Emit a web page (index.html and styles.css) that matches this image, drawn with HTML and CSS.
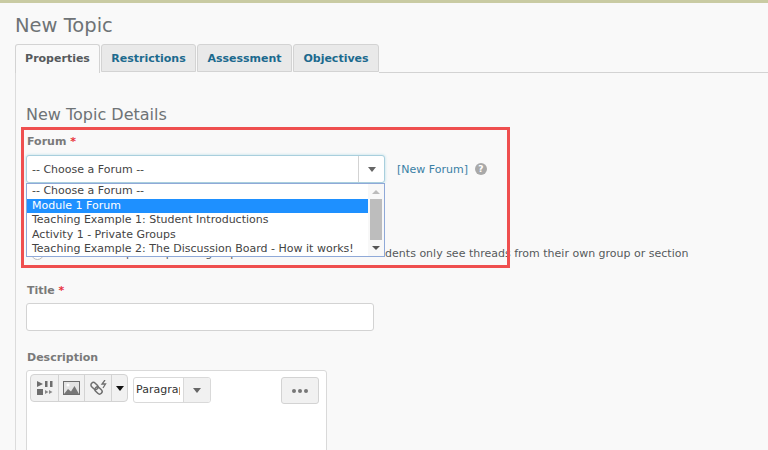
FILE: index.html
```html
<!DOCTYPE html>
<html lang="en">
  <head>
    <meta name="viewport" content="width=device-width" />
    <title>New Topic</title>
    <link rel="stylesheet" href="styles.css">
  </head>
  <body>
    <div class="topbar"></div>
    <main class="page">
      <h1>New Topic</h1>
      <div class="tabs">
        <a class="tab active">Properties</a>
        <a class="tab tab-restrictions">Restrictions</a>
        <a class="tab tab-assessment">Assessment</a>
        <a class="tab tab-objectives">Objectives</a>
        <span class="tabs-rest"></span>
      </div>
      <section class="panel">
        <h2>New Topic Details</h2>

        <label class="field-label">Forum <span class="req">*</span></label>
        <div class="forum-row">
          <div class="select">
            <span class="select-value">-- Choose a Forum --</span>
            <span class="select-arrow"><i class="caret"></i></span>
            <div class="listbox">
              <ul>
                <li>-- Choose a Forum --</li>
                <li class="selected">Module 1 Forum</li>
                <li>Teaching Example 1: Student Introductions</li>
                <li>Activity 1 - Private Groups</li>
                <li>Teaching Example 2: The Discussion Board - How it works!</li>
              </ul>
              <div class="scrollbar">
                <i class="sb-up"></i>
                <span class="sb-thumb"></span>
                <i class="sb-down"></i>
              </div>
            </div>
          </div>
          <a class="new-forum">[New Forum]</a>
          <span class="help">?</span>
        </div>

        <div class="radio-row">
          <span class="radio"></span>
          <span>Restrict this topic to specific groups or sections so that all students only see threads from their own group or section</span>
        </div>

        <label class="field-label title-label">Title <span class="req">*</span></label>
        <div class="text-input"></div>

        <label class="field-label desc-label">Description</label>
        <div class="editor">
          <div class="toolbar">
            <div class="btn-group">
              <span class="tool tool-media">
                <svg width="16" height="14" viewBox="0 0 16 14">
                  <path d="M0 0l6 3-6 3z" fill="#6e6e6e"/>
                  <rect x="8" y="0" width="2.5" height="6" fill="#6e6e6e"/>
                  <rect x="13" y="0" width="2.5" height="6" fill="#6e6e6e"/>
                  <rect x="0" y="8" width="6" height="6" fill="#6e6e6e"/>
                  <path d="M8 9l3.5 2-3.5 2zM12 9l3.5 2-3.5 2z" fill="#8a8a8a"/>
                </svg>
              </span>
              <span class="tool tool-image">
                <svg width="17" height="14" viewBox="0 0 17 14">
                  <rect x="0.5" y="0.5" width="16" height="13" fill="#e4e4e4" stroke="#6e6e6e"/>
                  <path d="M1 13l4-5 3 2.5 3.5-5.5 4.500 8z" fill="#777"/>
                  <circle cx="5" cy="4" r="1.500" fill="#fff"/>
                </svg>
              </span>
              <span class="tool tool-link">
                <svg width="17" height="16" viewBox="0 0 17 16" fill="none" stroke="#6e6e6e" stroke-width="1.500">
                  <rect x="0.500" y="3.500" width="8" height="5" rx="2.500" transform="rotate(45 4.500 6)"/>
                  <rect x="4.500" y="8" width="8" height="5" rx="2.500" transform="rotate(45 8.500 10.500)"/>
                  <path d="M15 0l-3 4h3.500l-2.500 4" stroke-width="1.300"/>
                </svg>
              </span>
              <span class="tool tool-more"><i class="caret dark"></i></span>
            </div>
            <div class="format">
              <span class="format-value">Paragraph</span>
              <span class="format-arrow"><i class="caret"></i></span>
            </div>
            <span class="more-btn"><i></i><i></i><i></i></span>
          </div>
        </div>
      </section>
    </main>
    <div class="highlight"></div>
  </body>
</html>
```

FILE: styles.css
```css
html, body {
  margin: 0;
  height: 450px;
  overflow: hidden;
}

body {
  background: #f9f9f9;
  color: #565a5c;
  font-family: "DejaVu Sans", Verdana, sans-serif;
  font-size: 11px;
}

.topbar {
  height: 3px;
  background: #c9cba3;
}

.page {
  padding: 0 0 0 15px;
}

h1 {
  margin: 0;
  padding-top: 11px;
  height: 30px;
  font-size: 19.500px;
  line-height: 24px;
  font-weight: normal;
  color: #6e7376;
}

/* tabs */
.tabs {
  display: flex;
  height: 29px;
}

.tab {
  box-sizing: border-box;
  height: 28px;
  margin-right: 1px;
  border: 1px solid #d3d3d3;
  border-radius: 3px 3px 0 0;
  background: #e9e9e9;
  color: #1c6a8e;
  font-weight: bold;
  font-size: 11px;
  line-height: 28px;
  text-align: center;
}

.tab.active {
  width: 85px;
  height: 29px;
  border-bottom: 0;
  background: #f9f9f9;
  color: #565a5c;
}

.tab-restrictions { width: 95px; }
.tab-assessment { width: 95px; }
.tab-objectives { width: 86px; margin-right: 0; }

.tabs-rest {
  flex: 1;
  height: 28px;
  border-bottom: 1px solid #d3d3d3;
}

.panel {
  border-left: 1px solid #dcdcdc;
  padding-left: 10px;
}

h2 {
  margin: 0;
  padding-top: 32px;
  height: 29px;
  font-size: 16px;
  line-height: 20px;
  font-weight: normal;
  color: #6e7376;
}

.field-label {
  display: block;
  height: 16px;
  padding-left: 1px;
  font-weight: bold;
  font-size: 11px;
  line-height: 16px;
  color: #7a7a7a;
}

.req {
  color: #e8313a;
}

/* forum select */
.forum-row {
  display: flex;
  align-items: center;
  margin-top: 5px;
  height: 28px;
}

.select {
  position: relative;
  box-sizing: border-box;
  display: flex;
  width: 359px;
  height: 28px;
  background: #fff;
  border: 1px solid #a9cfdd;
  border-radius: 3px;
  box-shadow: 0 0 3px #b5dde8;
}

.select-value {
  flex: 1;
  padding-left: 5px;
  line-height: 28px;
  color: #444;
}

.select-arrow {
  width: 25px;
  border-left: 1px solid #d3d3d3;
  display: flex;
  align-items: center;
  justify-content: center;
}

.caret {
  width: 0;
  height: 0;
  border-left: 4px solid transparent;
  border-right: 4px solid transparent;
  border-top: 5px solid #666;
}

.caret.dark {
  border-top-color: #111;
}

.listbox {
  position: absolute;
  left: -1px;
  top: 27px;
  box-sizing: border-box;
  display: flex;
  width: 359px;
  height: 74px;
  background: #fff;
  border: 1px solid #8fa9d8;
  z-index: 2;
}

.listbox ul {
  flex: 1;
  margin: 0;
  padding: 0;
  list-style: none;
  overflow: hidden;
}

.listbox li {
  height: 14.600px;
  line-height: 14.600px;
  padding-left: 5px;
  color: #444;
  white-space: nowrap;
}

.listbox li.selected {
  background: #1e90ff;
  color: #fff;
}

.scrollbar {
  width: 16px;
  display: flex;
  flex-direction: column;
  align-items: center;
  background: #f8f8f8;
}

.sb-up, .sb-down {
  flex: none;
  width: 0;
  height: 0;
  border-left: 4px solid transparent;
  border-right: 4px solid transparent;
}

.sb-up {
  margin: 6px 0 5px;
  border-bottom: 4px solid #bbb;
}

.sb-thumb {
  width: 12px;
  height: 41px;
  background: #bdbdbd;
}

.sb-down {
  margin-top: 6px;
  border-top: 4px solid #555;
}

.new-forum {
  margin-left: 12px;
  color: #3a7fa5;
}

.help {
  box-sizing: border-box;
  width: 12px;
  height: 12px;
  margin-left: 7px;
  border-radius: 50%;
  background: #a9a9a9;
  color: #fff;
  font-size: 9px;
  font-weight: bold;
  line-height: 12px;
  text-align: center;
}

.radio-row {
  display: flex;
  align-items: center;
  gap: 2px;
  margin-top: 62px;
  height: 16px;
  margin-left: 5px;
  color: #565a5c;
}

.radio {
  flex: none;
  box-sizing: border-box;
  width: 13px;
  height: 13px;
  border: 1px solid #bbb;
  border-radius: 50%;
  background: #fff;
}

.title-label {
  margin-top: 22px;
}

.text-input {
  box-sizing: border-box;
  width: 348px;
  height: 28px;
  margin-top: 4px;
  background: #fff;
  border: 1px solid #d3d3d3;
  border-radius: 3px;
}

.desc-label {
  margin-top: 19px;
}

/* editor */
.editor {
  box-sizing: border-box;
  width: 301px;
  height: 100px;
  margin-top: 4px;
  background: #fff;
  border: 1px solid #d9d9d9;
  border-radius: 3px;
  padding: 3px 7px 0 3px;
}

.toolbar {
  display: flex;
  align-items: flex-start;
}

.btn-group {
  display: flex;
  box-sizing: border-box;
  height: 28px;
  border: 1px solid #d3d3d3;
  border-radius: 4px;
  background: #f1f1f1;
}

.tool {
  display: flex;
  align-items: center;
  justify-content: center;
  box-sizing: border-box;
  border-right: 1px solid #d3d3d3;
}

.tool-media { width: 28px; }
.tool-image { width: 26px; }
.tool-link { width: 27px; }

.tool-more {
  width: 15px;
  border-right: 0;
}

.format {
  display: flex;
  box-sizing: border-box;
  width: 78px;
  height: 26px;
  margin: 3px 0 0 5px;
  border: 1px solid #d9d9d9;
  border-radius: 3px;
  background: #fff;
  overflow: hidden;
}

.format-value {
  box-sizing: border-box;
  width: 46px;
  margin-right: 3px;
  padding-left: 2px;
  overflow: hidden;
  line-height: 24px;
  color: #333;
  white-space: nowrap;
}

.format-arrow {
  flex: 1;
  display: flex;
  align-items: center;
  justify-content: center;
  background: #f1f1f1;
  border-left: 1px solid #d9d9d9;
}

.more-btn {
  display: flex;
  align-items: center;
  justify-content: center;
  gap: 2px;
  box-sizing: border-box;
  width: 38px;
  height: 27px;
  margin: 3px 0 0 auto;
  border: 1px solid #d3d3d3;
  border-radius: 3px;
  background: #f1f1f1;
}

.more-btn i {
  width: 4px;
  height: 4px;
  border-radius: 50%;
  background: #777;
}

/* red annotation box drawn on top of the screenshot */
.highlight {
  position: absolute;
  left: 21px;
  top: 127px;
  box-sizing: border-box;
  width: 489px;
  height: 141px;
  border: 3px solid #ef4f4f;
  z-index: 3;
}
```
